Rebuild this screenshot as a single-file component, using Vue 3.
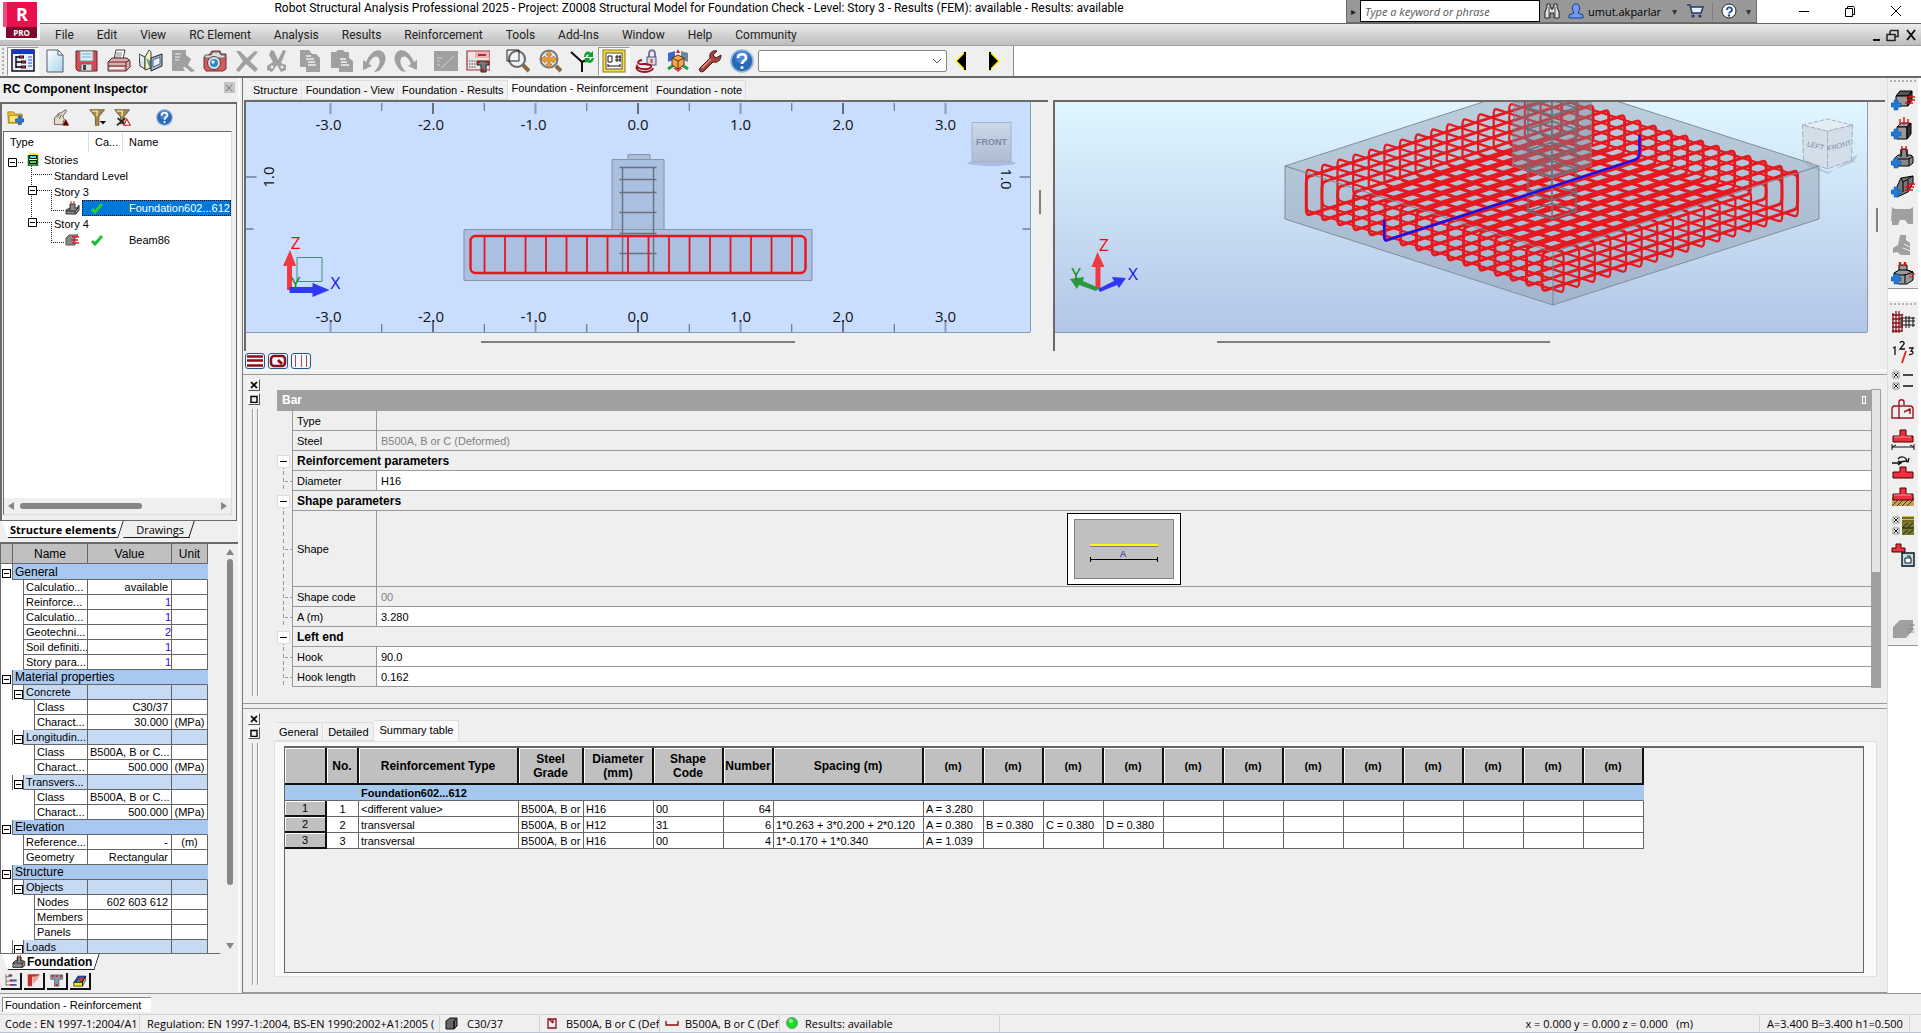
<script setup>
import { ref } from 'vue'

const keyword = ref('')
const command = ref('')

const menus = ['File', 'Edit', 'View', 'RC Element', 'Analysis', 'Results', 'Reinforcement', 'Tools', 'Add-Ins', 'Window', 'Help', 'Community']

const plus = '<path d="M0 15h3v-3h4v3h3v4h-3v3h-4v-3h-3z" fill="#1f7ad6" stroke="#1458a8" stroke-width=".6"/>'
const block = '<path d="M5 8l4-5h12l-4 5z" fill="#555" stroke="#000"/><path d="M5 8h12v10h-12z" fill="#999" stroke="#000"/><path d="M17 8l4-5v9l-4 6z" fill="#333" stroke="#000"/>'
const footing = '<path d="M10 3h6v6h4l2 2v6l-4 3h-15v-7l4-4h3z" fill="#888" stroke="#000"/><path d="M10 4v7M16 4v7M3 13h15v7M18 13l4-3M3 13l4-4" fill="none" stroke="#000"/><path d="M11 5v-5M15 5v-5" stroke="#e01010" stroke-width="1.4"/>'
const redFoot = '<path d="M9 3h6v6h7v6h-20v-6h7z" fill="#f03040" stroke="#400" stroke-width="1"/><path d="M3 10h17" stroke="#ff9090"/>'
const checks = '<path d="M2 3h6v6h-6zM2 14h6v6h-6z" fill="#fff" stroke="#888"/><path d="M3 4l4 4M7 4l-4 4M3 15l4 4M7 15l-4 4" stroke="#111"/>'

const icons = {
  inspector: '<rect x="1" y="1" width="22" height="21" fill="#e8eefc" stroke="#000" stroke-width="1.4"/><rect x="1" y="1" width="22" height="4" fill="#1238c8"/><path d="M5 7v12M5 8h4M5 13h6M5 18h6" stroke="#000" stroke-width="1.4" fill="none"/><path d="M8 8h5M10 13h5M10 18h5" stroke="#111" stroke-width="3"/><path d="M9 8h3M11 13h3M11 18h3" stroke="#d02020" stroke-width="1.6"/><path d="M17 8h4M17 11h4M17 14h4M17 17h4" stroke="#2050e0"/>',
  fresh: '<path d="M4 1h11l5 5v17h-16z" fill="url(#paper)" stroke="#50606c"/><path d="M15 1v5h5z" fill="#fff" stroke="#50606c"/>',
  save: '<path d="M1 2h21v20h-19l-2-2z" fill="#d84850" stroke="#6a2028"/><path d="M5 2h13v10h-13z" fill="#d6f0f6" stroke="#799"/><path d="M7 5h9M7 8h9" stroke="#7ab"/><path d="M6 15h11v7h-11z" fill="#ddd" stroke="#666"/><path d="M8 16h3v5h-3z" fill="#444"/>',
  print: '<path d="M7 10l2-9h9l-2 9z" fill="#fff" stroke="#444"/><path d="M9 4h6M9 6h6M8 8h6" stroke="#888"/><path d="M1 13l4-4h15l3 3v6l-4 4h-18z" fill="#e0a8a6" stroke="#4a2a2a"/><path d="M1 13h18v9M1 17h18M19 13l4-2" stroke="#5a2a2a" fill="none"/><path d="M3 19h14" stroke="#eee" stroke-width="2"/>',
  book: '<path d="M0 5l6 3v12l-5-3z" fill="#dfe9ee" stroke="#333"/><path d="M6 8l4-7 2 2v16l-6 2z" fill="#f2f0b8" stroke="#444"/><path d="M7 9l4 3v8z" fill="#4aa090"/><path d="M12 9l11-4v12l-11 5z" fill="#9fb8d8" stroke="#222"/><path d="M14 11l7-3v7l-7 3z" fill="#e8f0fa" stroke="#567"/>',
  preview: '<path d="M1 1h14v5l5 4-3 6 7 6-4 1-6-5h-2l2 4h-13z" fill="#a0a0a0"/><path d="M4 5h6M4 8h5M4 11h4" stroke="#efefef"/>',
  camera: '<path d="M1 8l6-3 2-3h8l1 3h5v15l-3 2h-17l-2-3z" fill="#dd5858" stroke="#6a3030"/><path d="M2 6h6l2-3h6l2 3h4v3h-20z" fill="#ddd" stroke="#666"/><circle cx="11" cy="14" r="6.5" fill="#d8dee2" stroke="#445"/><circle cx="11" cy="14" r="4" fill="#3a86b8"/><circle cx="10" cy="13" r="1.7" fill="#d8f0ff"/>',
  remove: '<path d="M1 2l4 0 7 7 8-7 3 1-8 9 8 8-3 3-9-8-7 8-3-2 7-9z" fill="#a0a0a0"/>',
  cut: '<path d="M5 1l3 1 4 9 5-10 3 1-5 12 5 2v5l-5 2-4-7-5 7-5-2v-4l6-4-4-7z" fill="#a0a0a0"/><circle cx="6" cy="18" r="1.5" fill="#efefef"/><circle cx="16" cy="18" r="1.5" fill="#efefef"/>',
  copy: '<path d="M2 1h9l3 4h4l4 4v14h-14v-5h-6z" fill="#a0a0a0"/><path d="M8 7h5M8 10h8M10 13h7M10 16h8" stroke="#efefef" stroke-width="1.3"/>',
  paste: '<path d="M1 3h5l2-2h5l2 2h4v6l4 3v11h-14v-4h-8z" fill="#a0a0a0"/><path d="M10 10h6M11 13h6M11 16h8" stroke="#efefef" stroke-width="1.3"/>',
  undo: '<path d="M1 21v-10l3 2c5-11 12-14 17-10 5 6 2 13-4 19l-5 1c6-7 7-11 4-15-4-2-7 2-9 7l3 2z" fill="#a0a0a0"/>',
  redo: '<path d="M23 21v-10l-3 2c-5-11-12-14-17-10-5 6-2 13 4 19l5 1c-6-7-7-11-4-15 4-2 7 2 9 7l-3 2z" fill="#a0a0a0"/>',
  form: '<path d="M0 2h24v20h-24z" fill="#a0a0a0"/><path d="M3 9h6M3 12h3M3 16h3M7 19l13-12" stroke="#d0d0d0"/>',
  calc: '<path d="M1 2h23v19h-23z" fill="#ece4e4" stroke="#a03038" stroke-width="1.2"/><path d="M9 3h14v6h-14z" fill="#f4b0b0"/><path d="M12 6h8" stroke="#a03038" stroke-width="2"/><path d="M3 12h7M3 15h7M3 18h7" stroke="#444" stroke-dasharray="1.5 1"/><path d="M11 12h12v4h-3v7h-5v-7h-4z" fill="#777" stroke="#222"/><path d="M12 13h2M20 13h2M16 21h2" stroke="#e00" stroke-width="2"/>',
  zoom: '<circle cx="11" cy="10" r="8" fill="#eef2f4" fill-opacity=".9" stroke="#666" stroke-width="2"/><path d="M1 1h12v11h-12z" fill="none" stroke="#222"/><path d="M17 16l6 6" stroke="#8a6a40" stroke-width="4"/>',
  pan: '<circle cx="11" cy="10" r="8.5" fill="#e4e8ec" stroke="#777" stroke-width="2"/><path d="M11 2l3 4h-2v3h3v-2l4 3-4 4v-2h-3v3h2l-3 4-3-4h2v-3h-3v2l-4-4 4-3v2h3v-3h-2z" fill="#f0a030" stroke="#a06010" stroke-width=".6"/><path d="M18 17l5 5" stroke="#8a6a40" stroke-width="4"/>',
  axes: '<path d="M1 3l11 10v10M12 13l6-3" stroke="#111" stroke-width="2" fill="none"/><path d="M14 8c0-5 4-7 7-4l2-2v6h-6l2-2c-2-1-3 0-3 2zM24 9c-1 5-4 6-7 4l-2 1v-5h5l-1 2c2 0 2-1 3-2z" fill="#10a030"/>',
  dims: '<rect x="1" y="1" width="22" height="22" fill="#f8e040" stroke="#8a7a10"/><rect x="4" y="4" width="16" height="16" fill="#fff" stroke="#555"/><path d="M6 7h4v6h-4zM13 8h6M13 11h6M15 6v7M18 6v7M6 17h12M6 15v3M18 15v3" stroke="#111" fill="none"/>',
  lock: '<path d="M15 8v-3c0-5 6-5 6 0v3" fill="none" stroke="#779" stroke-width="2"/><rect x="13" y="8" width="9" height="8" fill="#d4dcec" stroke="#557"/><path d="M17.500 10v4" stroke="#d05020" stroke-width="2"/><path d="M8 11c-6 1-5 5 2 4 5 0 8 1 7 3-3 4-13 2-14-1-2 4 3 6 8 6 4 0 8-2 8-4" fill="none" stroke="#9a1020" stroke-width="1.8"/>',
  cube: '<path d="M2 4l7-2v8l-7 3z" fill="#3a66d8"/><path d="M15 2l7 2v9l-7-3z" fill="#6a8a9a"/><path d="M12 0l2 4h-4z" fill="#d02020"/><path d="M2 20l6-4M22 20l-6-4" stroke="#20a040" stroke-width="3"/><path d="M7 19l5 4 5-4z" fill="#f04040"/><path d="M6 9l6-3 6 3v7l-6 4-6-4z" fill="#f0a850" stroke="#5a3010"/><path d="M6 9l6 3 6-3M12 12v8" fill="none" stroke="#5a3010"/>',
  wrench: '<path d="M2 19l10-10c-1-5 2-8 7-7l-4 4 3 3 5-3c0 6-4 8-8 7l-9 9c-3 2-6 0-4-3z" fill="#a84040" stroke="#401818"/><path d="M4 19l9-9" stroke="#e09090" stroke-width="1.5"/>',
  help: '<circle cx="12" cy="12" r="11" fill="#2a68b8" stroke="#8fb6dc" stroke-width="1.6"/><circle cx="12" cy="8" r="6.5" fill="#5c98dc" opacity=".7"/><path d="M8 9c0-5 8-5 8-.5 0 3-4 3-4 6.500" fill="none" stroke="#fff" stroke-width="2.6"/><circle cx="12" cy="18.500" r="1.6" fill="#fff"/>',
  folder: '<path d="M1 4h8l2 3h10v13h-19z" fill="#e8c030" stroke="#907010"/><path d="M3 9h19l-2 10h-17z" fill="#fbe470" stroke="#a08010"/><path d="M12 14h4v-4h4v4h4v4h-4v4h-4v-4h-4z" fill="#2a7ad8" stroke="#14509a"/>',
  hand: '<path d="M2 22v-9l6-7 4-1 6-4 1 2-5 7 2 5-3 7z" fill="#e4dcc8" stroke="#3a3020"/><path d="M6 12l3-5M9 14l3-6" stroke="#3a3020"/><path d="M14 23l4-8 4 8z" fill="#400" stroke="#900"/>',
  funnel: '<path d="M1 1h21l-8 10v12h-5v-12z" fill="#a88848" stroke="#5a4418"/><path d="M4 3h8l-1 7" stroke="#efe0b0" stroke-width="2" fill="none"/><path d="M15 17h9l-4 5z" fill="#111"/>',
  funnelx: '<path d="M1 1h21l-8 10v10h-5v-10z" fill="#a88848" stroke="#5a4418"/><path d="M4 3h8l-1 7" stroke="#efe0b0" stroke-width="2" fill="none"/><path d="M5 13l12 10M16 13l-12 10" stroke="#222" stroke-width="2.4"/><path d="M14 23l4-9 5 9z" fill="#fff" stroke="#d02020" stroke-width="1.6"/>',
  beamAdd: block + '<path d="M15 9h9M16 12h8M14 15h8" stroke="#e01010" stroke-width="1.4"/>' + plus,
  colAdd: '<path d="M6 10l4-4h9l-3 4z" fill="#aaa" stroke="#000"/><path d="M6 10h10v12h-10z" fill="#999" stroke="#000"/><path d="M16 10l4-4v11l-4 5z" fill="#333" stroke="#000"/><path d="M9 8v-6M13 8v-8M17 8v-6" stroke="#e01010" stroke-width="1.4"/>' + plus,
  footing,
  footAdd: footing + plus,
  wallAdd: '<path d="M3 18l7-15 12-2v7l-5 9-11 5z" fill="#777" stroke="#000"/><path d="M10 3l2 4 10-6M12 7v10M17 5v9" stroke="#000" fill="none"/><path d="M14 12h9M14 15h8M17 9h7" stroke="#e01010" stroke-width="1.3"/>' + plus,
  wallOff: '<path d="M1 3l3 2h15l3-2v17h-5l-3-4h-5l-2 5h-6v-4h-1z" fill="#a0a0a0"/>',
  slabOff: '<path d="M9 2h6v5l4 3v12h-9l-4-3-4 1v-5l5-3z" fill="#a0a0a0"/><path d="M13 11l6 3M12 15l7 3" stroke="#efefef"/>',
  jointAdd: '<path d="M8 3h8v5l6 2v8l-6 4h-8l-5-4v-7l5-3z" fill="#999" stroke="#000"/><path d="M8 8h8l6 2M14 12v9M3 11l5 2h6l8-3" fill="none" stroke="#000"/><path d="M9 4v-4M14 4v-4" stroke="#e01010" stroke-width="2.4"/><path d="M18 12h6M18 15h5" stroke="#e01010"/>' + plus,
  mesh: '<path d="M2 2v20M5 0v22M8 0v22M11 3v18M1 4h11M1 8h11M1 12h11M1 16h11M1 20h10" stroke="#8a1018" stroke-width="1.300"/><path d="M9 7h15M9 10h15M9 14h15M15 5v12M18 5v12M22 6v10" stroke="#111"/>',
  order: '<path d="M2 8l2-1v8M9 3c1-3 5-1 4 1l-4 5h5M18 8h4l-2 3c3 0 3 4-2 3.500" fill="none" stroke="#111" stroke-width="1.3"/><path d="M15 11l-4 12" stroke="#e02020" stroke-width="1.8"/>',
  checklist: checks + '<path d="M12 6h10M12 17h10" stroke="#111" stroke-width="1.3"/>',
  stirrup: '<path d="M8 21v-17c0-3 5-3 5 0v3M2 8h17c3 0 3 3 3 3v9h-21v-9c0-3 3-3 3-3M13 14l6-3v5" fill="none" stroke="#9a1828" stroke-width="1.4"/>',
  footDim: redFoot + '<path d="M1 20h22M1 17v6M23 17v6M1 20l4-2M23 20l-4-2" stroke="#111" fill="none"/>',
  footRot: '<path d="M9 11h6v5h7v6h-20v-6h7z" fill="#f03040" stroke="#400"/><path d="M1 7h9M7 5l3 2-3 2M7 3c3-4 8-2 9 2M14 5l3 1 1-4M8 6l8-1" stroke="#111" fill="none" stroke-width="1.3"/>',
  footSoil: '<path d="M1 12h22v9h-22z" fill="#c8a060"/><path d="M1 21l6-6M6 21l6-6M11 21l6-6M16 21l6-6M1 14h22" stroke="#4a3010"/>' + redFoot,
  soilList: checks + '<path d="M11 2h12v6h-12z" fill="#d8c040"/><path d="M11 8h12v13h-12z" fill="#7a7a28"/><path d="M11 4h12M11 7h12M11 14h12" stroke="#111"/><path d="M12 13l5-4M17 13l5-4M12 20l5-4M17 20l5-4" stroke="#222"/>',
  footView: '<path d="M5 1h5v4h4v4h-13v-4h4z" fill="#f03040" stroke="#400"/><path d="M11 10h12v13h-12z" fill="#b8dcf4" stroke="#111" stroke-width="1.4"/><path d="M14 15h6v5h-6zM16 13h3v2" fill="#fff" stroke="#111"/>',
  solidOff: '<path d="M2 10l7-7h13v10l-7 8h-13z" fill="#a0a0a0"/><path d="M18 8h6M17 12h6M16 15h7" stroke="#888"/>',
  treeTab: '<path d="M4 2v18M4 6h6M4 13h6M4 19h6" stroke="#333" fill="none"/><path d="M8 4h6M12 12h9M12 19h9" stroke="#3858b8" stroke-width="3"/><path d="M10 4h3M10 12h4M10 19h4" stroke="#d02020" stroke-width="3"/>',
  cornerTab: '<path d="M2 2h19l-2 4h-10v15h-7z" fill="#c03030"/><path d="M10 7l10-4-3 8-7 6z" fill="#f0a0a0"/>',
  teeTab: '<path d="M2 3h19v7h-6v11h-7v-11h-6z" fill="#8898a8" stroke="#445"/><path d="M4 5h3M10 5h3M17 5h3M10 19h3" stroke="#e01818" stroke-width="3"/>',
  mapTab: '<path d="M2 15l7-10h12l-5 10z" fill="#2040d0" stroke="#000"/><path d="M8 13l4-6 6 1-4 6z" fill="#e03020"/><path d="M6 14l4-3 3 3z" fill="#20c040"/><path d="M2 15h14v6h-14zM16 15l5-10v6l-5 10z" fill="#f8e820" stroke="#000"/>'
}

const tools = [
  ['inspector', 'Inspector'], ['fresh', 'New'], ['save', 'Save'], ['print', 'Print'], ['book', 'Compose'], ['preview', 'Preview'],
  ['camera', 'Capture'], ['remove', 'Delete'], ['cut', 'Cut'], ['copy', 'Copy'], ['paste', 'Paste'], ['undo', 'Undo'], ['redo', 'Redo'],
  null, ['form', 'Parameters'], ['calc', 'Calculate'],
  null, ['zoom', 'Zoom'], ['pan', 'Pan'], ['axes', 'Refresh view'], ['dims', 'Dimensions'], ['lock', 'Lock'], ['cube', 'Projection'], ['wrench', 'Preferences'], ['help', 'Help']
]
const pressed = ['inspector', 'dims']

const addTools = ['beamAdd', 'colAdd', 'footAdd', 'wallAdd', 'wallOff', 'slabOff', 'jointAdd']
const editTools = ['mesh', 'order', 'checklist', 'stirrup', 'footDim', 'footRot', 'footSoil', 'soilList', 'footView']

const docTabs = ['Structure', 'Foundation - View', 'Foundation - Results', 'Foundation - Reinforcement', 'Foundation - note']

// kind: c = category, s = sub-category, 1 / 2 = item level
const props = [
  ['c', 'General'],
  ['1', 'Calculatio...', 'available'], ['1', 'Reinforce...', '1', '', 1], ['1', 'Calculatio...', '1', '', 1],
  ['1', 'Geotechni...', '2', '', 1], ['1', 'Soil definiti...', '1', '', 1], ['1', 'Story para...', '1', '', 1],
  ['c', 'Material properties'],
  ['s', 'Concrete'], ['2', 'Class', 'C30/37'], ['2', 'Charact...', '30.000', '(MPa)'],
  ['s', 'Longitudin...'], ['2', 'Class', 'B500A, B or C...'], ['2', 'Charact...', '500.000', '(MPa)'],
  ['s', 'Transvers...'], ['2', 'Class', 'B500A, B or C...'], ['2', 'Charact...', '500.000', '(MPa)'],
  ['c', 'Elevation'], ['1', 'Reference...', '-', '(m)'], ['1', 'Geometry', 'Rectangular'],
  ['c', 'Structure'],
  ['s', 'Objects'], ['2', 'Nodes', '602 603 612'], ['2', 'Members', ''], ['2', 'Panels', ''],
  ['s', 'Loads']
]

const barRows = [
  { label: 'Type', value: '', off: true, plain: true },
  { label: 'Steel', value: 'B500A, B or C (Deformed)', off: true, plain: true },
  { head: 'Reinforcement parameters' },
  { label: 'Diameter', value: 'H16' },
  { head: 'Shape parameters' },
  { label: 'Shape', shape: true, off: true },
  { label: 'Shape code', value: '00', off: true },
  { label: 'A (m)', value: '3.280' },
  { head: 'Left end' },
  { label: 'Hook', value: '90.0' },
  { label: 'Hook length', value: '0.162' }
]

const heads = ['', 'No.', 'Reinforcement Type', 'Steel Grade', 'Diameter (mm)', 'Shape Code', 'Number', 'Spacing (m)', ...Array(12).fill('(m)')]
const summary = [
  ['1', '<different value>', 'B500A, B or', 'H16', '00', '64', '', 'A = 3.280'],
  ['2', 'transversal', 'B500A, B or', 'H12', '31', '6', '1*0.263 + 3*0.200 + 2*0.120', 'A = 0.380', 'B = 0.380', 'C = 0.380', 'D = 0.380'],
  ['3', 'transversal', 'B500A, B or', 'H16', '00', '4', '1*-0.170 + 1*0.340', 'A = 1.039']
].map(r => [...r, ...Array(19 - r.length).fill('')])

const step = 102.5
const ticks = [-3, -2, -1, 0, 1, 2, 3].map(n => ({ x: 392.5 + n * step, t: n.toFixed(1), dark: n % 2 === 0 }))
const halfTicks = [-2.5, -1.5, -0.5, 0.5, 1.5, 2.5].map(n => 392.5 + n * step)
const stirrups = Array.from({ length: 16 }, (_, i) => 239 + i * 20.5)

// Axonometric projection of the footing: u, v along the sides, z upwards (0..1 each)
const pt = (u, v, z) => `${(498 + 266 * u - 268 * v).toFixed(1)} ${(203 - 86 * u - 86 * v - 53 * z).toFixed(1)}`
const hoop = (f, lo, hi) => {
  const a = 0.02, b = 0.98, r = 0.012, q = 0.12
  return `M${f(a, lo + q)}L${f(a, hi - q)}Q${f(a, hi)} ${f(a + r, hi)}L${f(b - r, hi)}Q${f(b, hi)} ${f(b, hi - q)}L${f(b, lo + q)}Q${f(b, lo)} ${f(b - r, lo)}L${f(a + r, lo)}Q${f(a, lo)} ${f(a, lo + q)}`
}
const spots = Array.from({ length: 16 }, (_, i) => 0.06 + i * 0.0587)
const cageX = spots.map(s => hoop((t, z) => pt(t, s, z), 0.13, 0.85)).join('')
const cageY = spots.map(s => hoop((t, z) => pt(s, t, z), 0.1, 0.88)).join('')
const hull = `M${pt(0, 0, 0)}L${pt(1, 0, 0)}L${pt(1, 0, 1)}L${pt(1, 1, 1)}L${pt(0, 1, 1)}L${pt(0, 1, 0)}Z`
const edges = `M${pt(0, 0, 0)}L${pt(0, 0, 1)}L${pt(1, 0, 1)}M${pt(0, 0, 1)}L${pt(0, 1, 1)}`
const ring = z => `M${pt(0.455, 0.455, z)}L${pt(0.545, 0.455, z)}L${pt(0.545, 0.545, z)}L${pt(0.455, 0.545, z)}Z`
const colBars = [0.15, 0.5, 0.95, 1.3, 1.7, 2.1, 2.4].map(ring).join('') +
  [[0.455, 0.455], [0.545, 0.455], [0.455, 0.545], [0.545, 0.545]].map(([u, v]) => `M${pt(u, v, 0.12)}L${pt(u, v, 2.8)}`).join('')
const column = `M${pt(0.4265, 0.4265, 1)}L${pt(0.5735, 0.4265, 1)}V0H459L${pt(0.4265, 0.5735, 1)}Z`
const marked = `M${pt(0.02, 0.65, 0.52)}L${pt(0.02, 0.65, 0.2)}Q${pt(0.02, 0.65, 0.1)} ${pt(0.035, 0.65, 0.12)}L${pt(0.96, 0.65, 0.12)}Q${pt(0.98, 0.65, 0.12)} ${pt(0.98, 0.65, 0.24)}V33`
</script>

<template>
  <div class="app">
    <svg class="defs" width="0" height="0" aria-hidden="true">
      <defs>
        <linearGradient id="paper" x1="0" y1="0" x2="1" y2="1"><stop offset="0" stop-color="#fff" /><stop offset="1" stop-color="#a8d4ec" /></linearGradient>
        <linearGradient id="sky" x1="0" y1="0" x2="0" y2="1"><stop offset="0" stop-color="#e0f6ff" /><stop offset="1" stop-color="#b2c6e7" /></linearGradient>
        <linearGradient id="face" x1="0" y1="0" x2="0" y2="1"><stop offset="0" stop-color="#cdd9ea" /><stop offset="1" stop-color="#aebbd2" /></linearGradient>
      </defs>
    </svg>

    <header class="top">
      <div class="logo" aria-hidden="true">
        <span class="logo-r">R</span><span class="logo-pro">PRO</span>
      </div>
      <div class="titlebar">
        <h1>Robot Structural Analysis Professional 2025 - Project: Z0008 Structural Model for Foundation Check - Level: Story 3 - Results (FEM): available - Results: available</h1>
        <div class="infobar">
          <span class="tri">▸</span>
          <input v-model="keyword" type="text" aria-label="Search" placeholder="Type a keyword or phrase">
          <svg class="binoc" width="16" height="16" viewBox="0 0 16 16"><path d="M3 1h3v3h1v2h2v-2h1v-3h3v3l2 5v6h-5v-5h-4v5h-5v-6l2-5z" fill="#e4e4e4" stroke="#222" /><path d="M5 4v10M11 4v10" stroke="#444" /></svg>
          <svg width="16" height="16" viewBox="0 0 16 16"><path d="M8 1c5 0 4 7 2 9l5 2v3h-14v-3l5-2c-2-2-3-9 2-9z" fill="#6f9cf0" stroke="#1a3a8a" /></svg>
          <button class="user">umut.akparlar</button><span class="drop">▾</span>
          <svg class="cart" width="17" height="16" viewBox="0 0 17 16"><path d="M0 2h3l2 8h9l2-6h-12" fill="#e8eeff" stroke="#223a6a" stroke-width="1.500" /><circle cx="6" cy="13" r="1.600" fill="#223a6a" /><circle cx="13" cy="13" r="1.600" fill="#223a6a" /></svg>
          <i class="vsep" />
          <svg width="17" height="17" viewBox="0 0 17 17"><circle cx="8" cy="8" r="7" fill="#fff" stroke="#222" /><path d="M6 7c0-4 5-3 5 0 0 2-3 2-3 3.500" stroke="#1a4aa8" stroke-width="1.800" fill="none" /><circle cx="8" cy="12.500" r="1.200" fill="#1a4aa8" /></svg>
          <span class="drop">▾</span>
        </div>
        <div class="winctl">
          <button aria-label="Minimize"><svg width="12" height="12" viewBox="0 0 12 12"><path d="M1 6.500h10" stroke="#000" /></svg></button>
          <button aria-label="Restore"><svg width="12" height="12" viewBox="0 0 12 12"><path d="M1.500 3.500h7v8h-7zM3.500 3v-1.500h6l1 1v7h-1.500" fill="none" stroke="#000" /></svg></button>
          <button aria-label="Close"><svg width="12" height="12" viewBox="0 0 12 12"><path d="M1 1l10 10M11 1l-10 10" stroke="#000" /></svg></button>
        </div>
      </div>
      <nav class="menubar">
        <button v-for="m in menus" :key="m">{{ m }}</button>
        <svg class="mdi" width="46" height="16" viewBox="0 0 46 16" aria-hidden="true"><path d="M1 13h7" stroke="#111" stroke-width="2" /><path d="M18 3.500h8v6h-3M18 4v3M15 7.500h8v6h-8z" fill="none" stroke="#222" stroke-width="1.500" /><path d="M35 3l8 10M43 3l-8 10" stroke="#111" stroke-width="2" /></svg>
      </nav>
    </header>

    <div class="toolbar">
      <div class="tools">
        <i class="grip" />
        <template v-for="(t, i) in tools" :key="i">
          <i v-if="!t" class="gap" />
          <button v-else :class="{ on: pressed.includes(t[0]) }" :aria-label="t[1]"><svg width="24" height="24" viewBox="0 0 24 24" v-html="icons[t[0]]" /></button>
        </template>
        <select v-model="command" aria-label="Selection"><option value="" /></select>
        <button class="nav" aria-label="Previous"><svg width="14" height="20" viewBox="0 0 14 20"><path d="M11 1v18l-9-9z" stroke="#fff200" stroke-width="1.500" /><path d="M11 1v18" stroke="#000" stroke-width="2" /></svg></button>
        <button class="nav" aria-label="Next"><svg width="14" height="20" viewBox="0 0 14 20"><path d="M3 1v18l9-9z" stroke="#fff200" stroke-width="1.500" /><path d="M3 1v18" stroke="#000" stroke-width="2" /></svg></button>
      </div>
    </div>

    <div class="body">
      <aside class="left">
        <h2>RC Component Inspector <button class="x" aria-label="Close inspector"><svg width="10" height="10" viewBox="0 0 10 10"><path d="M2 2l6 6M8 2l-6 6" stroke="#777" /></svg></button></h2>
        <section class="inspector">
          <div class="itools">
            <button v-for="n in ['folder', 'hand', 'funnel', 'funnelx', 'help']" :key="n" :class="n" :aria-label="n"><svg width="17" height="17" viewBox="0 0 24 24" v-html="icons[n]" /></button>
          </div>
          <div class="tree">
            <div class="thead"><span class="c1">Type</span><span class="c2">Ca...</span><span class="c3">Name</span></div>
            <div class="row">
              <svg width="40" height="16"><path d="M4.500 6.500h8v8h-8zM6 10.500h5" fill="none" stroke="#000" /><path d="M14 10.500h6M27.500 14v2" class="dot" /><path d="M25 1h9v3h-9z" fill="#f8f020" /><path d="M25.500 3.500h7v3h-7z" fill="#30e8e8" stroke="#000" /><path d="M25.500 8.500h7v3h-7z" fill="#40e840" stroke="#000" /><path d="M24.500 3v11M33.500 3v11M24 13h10" stroke="#186018" stroke-width="1.500" /></svg>Stories
            </div>
            <div class="row"><svg width="50" height="16"><path d="M27.500 0v16M27 6.500h21" class="dot" /></svg>Standard Level</div>
            <div class="row"><svg width="50" height="16"><path d="M27.500 0v16M33 6.500h15M47.500 6v10" class="dot" /><path d="M24.500 2.500h8v8h-8zM26 6.500h5" fill="#fff" stroke="#000" /></svg>Story 3</div>
            <div class="row">
              <svg width="78" height="16"><path d="M27.500 0v16M47.500 0v10M47 10.500h13" class="dot" /><path d="M66 4h5v4h2l2-3v5l-3 4h-10v-4l4-2z" fill="#888" stroke="#333" /><path d="M66 8v3M62 11h9v3M71 11l4-4" fill="none" stroke="#333" /><path d="M67 1v3M70 1v3" stroke="#e02020" /></svg>
              <span class="sel"><svg class="check" width="14" height="12" viewBox="0 0 14 12"><path d="M2 7l3 3 7-8" stroke="#20d030" stroke-width="3" fill="none" /></svg><span>Foundation602...612</span></span>
            </div>
            <div class="row"><svg width="50" height="16"><path d="M27.500 0v3M33 6.500h15M47.500 6v10" class="dot" /><path d="M24.500 2.500h8v8h-8zM26 6.500h5" fill="#fff" stroke="#000" /></svg>Story 4</div>
            <div class="row">
              <svg width="78" height="16"><path d="M47.500 0v10M47 10.500h13" class="dot" /><path d="M62 6l3-3h9l-3 3v7h-9z" fill="#888" stroke="#555" /><path d="M68 5h7M67 8h7M68 11h7" stroke="#e02020" stroke-width="1.500" /></svg>
              <span class="unsel"><svg class="check" width="14" height="12" viewBox="0 0 14 12"><path d="M2 7l3 3 7-8" stroke="#20c030" stroke-width="3" fill="none" /></svg><span>Beam86</span></span>
            </div>
            <div class="hscroll"><i class="al" /><i class="bar" /><i class="ar" /></div>
          </div>
        </section>
        <div class="cuttabs">
          <button class="cut act">Structure elements</button><button class="cut">Drawings</button>
        </div>

        <section class="props">
          <div class="gridclip">
            <table>
              <colgroup><col class="w12"><col class="w11"><col class="w11"><col class="w53"><col class="w84"><col class="w36"></colgroup>
              <thead><tr><th /><th colspan="3">Name</th><th>Value</th><th>Unit</th></tr></thead>
              <tbody>
                <tr v-for="(p, i) in props" :key="i" :class="'k' + p[0]">
                  <template v-if="p[0] === 'c'"><td class="blank"><i class="pm" /></td><td colspan="5">{{ p[1] }}</td></template>
                  <template v-else-if="p[0] === 's'"><td class="blank" /><td class="blank"><i class="pm" /></td><td colspan="2" class="sub">{{ p[1] }}</td><td class="sub" /><td class="sub" /></template>
                  <template v-else>
                    <td class="blank" :colspan="p[0] === '1' ? 2 : 3" /><td :colspan="p[0] === '1' ? 2 : 1">{{ p[1] }}</td>
                    <td class="val" :class="{ link: p[4] }">{{ p[2] }}</td><td class="unit">{{ p[3] }}</td>
                  </template>
                </tr>
              </tbody>
            </table>
          </div>
          <div class="vscroll"><i class="au" /><i class="bar" /><i class="ad" /></div>
        </section>
        <div class="foottab"><button class="cut act"><svg width="17" height="15" viewBox="0 0 24 24" v-html="icons.footing" />Foundation</button></div>
        <div class="modes">
          <button v-for="n in ['treeTab', 'cornerTab', 'teeTab', 'mapTab']" :key="n" :aria-label="n"><svg width="16" height="15" viewBox="0 0 24 24" v-html="icons[n]" /></button>
        </div>
      </aside>

      <main class="center">
        <div class="tabs">
          <button v-for="t in docTabs" :key="t" :class="{ act: t === 'Foundation - Reinforcement' }">{{ t }}</button>
        </div>
        <div class="views">
          <section class="view front">
            <svg class="canvas" viewBox="0 0 785 230" preserveAspectRatio="xMidYMid slice">
              <rect width="785" height="230" fill="#c9ddff" />
              <path v-for="x in halfTicks" :key="x" :d="`M${x} 1v8M${x} 222v8`" stroke="#55657c" />
              <g v-for="t in ticks" :key="t.t">
                <path :d="`M${t.x} 1v11M${t.x} 218v12`" :stroke="t.dark ? '#000' : '#8a9cb8'" :stroke-width="t.dark ? 1 : 2" />
                <text :x="t.x - (t.t[0] === '-' ? 2 : 0)" y="28" class="tick">{{ t.t }}</text>
                <text :x="t.x - (t.t[0] === '-' ? 2 : 0)" y="220" class="tick">{{ t.t }}</text>
              </g>
              <path d="M0 75h11M774 75h11M0 127h8M777 127h8" stroke="#6f8098" stroke-width="1.500" />
              <text transform="translate(28 75) rotate(-90)" class="tick">1.0</text>
              <text transform="translate(755 77) rotate(90)" class="tick">1.0</text>
              <g fill="#8296b4" fill-opacity=".42" stroke="#8a94a4"><path d="M218.500 127.500h348v51h-348zM366.500 57.500h52v70h-52zM382.500 52.500h22v5h-22z" /></g>
              <path d="M377 65v105M408 65v105M374 65.500h37M374 77.500h37M374 90.500h37M374 110.500h37M374 131.500h37M374 151.500h37" stroke="#68707e" stroke-width="1.400" />
              <g stroke="#e8141c" fill="none"><rect x="225" y="134" width="335" height="37" rx="5" stroke-width="2.400" /><path v-for="x in stirrups" :key="x" :d="`M${x} 134v37`" stroke-width="1.800" /></g>
              <path d="M51.500 155.500h25v24h-25z" fill="none" stroke="#4a8a78" />
              <path d="M41.500 188v-24h-4l7-16 6 16h-4v24z" fill="#f23840" />
              <path d="M44 185h23v-4l17 7-17 7v-4h-23z" fill="#3038f8" />
              <g class="axis"><text x="50" y="147" fill="#f00">Z</text><text x="50" y="187" fill="#0a8a0a">Y</text><text x="90" y="187" fill="#1010f0">X</text></g>
              <ellipse cx="746" cy="61" rx="24" ry="3" fill="#7a8cb0" opacity=".4" />
              <path d="M726.500 20.500h39v39h-39z" fill="url(#face)" stroke="#a2b2cc" />
              <text x="746" y="43" class="cubetxt">FRONT</text>
            </svg>
            <div class="vs"><i /></div>
            <div class="hs"><i /></div>
          </section>
          <section class="view iso">
            <svg class="canvas" viewBox="0 0 812 230" preserveAspectRatio="xMidYMid slice">
              <rect width="812" height="230" fill="url(#sky)" />
              <path :d="hull" fill="#8492a6" fill-opacity=".4" stroke="#858c94" />
              <path :d="cageY" fill="none" stroke="#e61820" stroke-width="2.200" />
              <path :d="cageX" fill="none" stroke="#e61820" stroke-width="3" />
              <path :d="edges" fill="none" stroke="#80868e" />
              <path :d="column" fill="#7c8896" fill-opacity=".42" stroke="#82888f" stroke-dasharray="3 1" />
              <path :d="colBars" fill="none" stroke="#6c727a" stroke-width="1.600" />
              <path :d="marked" fill="none" stroke="#1010ff" stroke-width="2.400" />
              <path d="M40.500 187v-22h-4l6-15 7 15h-4v22z" fill="#f23840" />
              <path d="M43 187l16-8-2-4 14 1-7 10-2-3-17 7z" fill="#3038f8" />
              <path d="M44 186l-16-7 1-4-14 2 7 10 2-4 17 6z" fill="#2a9a3a" />
              <g class="axis"><text x="49" y="149" fill="#f00">Z</text><text x="21" y="178" fill="#0a8a0a">Y</text><text x="78" y="178" fill="#1010f0">X</text></g>
              <path d="M750 60l23 10 26-10 4-8-30 20-20-8z" fill="#8898b4" opacity=".4" />
              <path d="M747.500 23l25 6v38l-24-9zM797.500 23l-25 6v38l24-9z" fill="#d3dee8" stroke="#a4b0be" stroke-dasharray="6 2" />
              <path d="M747.500 23l25-6 25 6-25 6z" fill="#e4edf2" stroke="#a4b0be" stroke-dasharray="4 2" />
              <text transform="translate(760 46) rotate(14)" class="cubetxt sm">LEFT</text>
              <text transform="translate(785 46) rotate(-14)" class="cubetxt sm">FRONT</text>
            </svg>
            <div class="vs"><i /></div>
            <div class="hs"><i /></div>
          </section>
        </div>
        <div class="layers">
          <button aria-label="Longitudinal bars"><svg width="18" height="14" viewBox="0 0 18 14"><path d="M1 2.500h16M1 6.500h16M1 11.500h16" stroke="#8a1018" stroke-width="2.400" /></svg></button>
          <button aria-label="Stirrups"><svg width="18" height="14" viewBox="0 0 18 14"><rect x="2" y="2" width="14" height="10" rx="3" fill="none" stroke="#8a1018" stroke-width="2.500" /><path d="M9 6l4 4" stroke="#8a1018" stroke-width="3" /></svg></button>
          <button aria-label="Vertical bars"><svg width="18" height="14" viewBox="0 0 18 14"><path d="M3.500 1v12M9.500 1v12M14.500 1v12" stroke="#b04850" /></svg></button>
        </div>

        <section class="dock bar">
          <div class="side"><button aria-label="Close panel"><svg width="8" height="8" viewBox="0 0 8 8"><path d="M1 1l6 6M7 1l-6 6" stroke="#000" stroke-width="1.600" /></svg></button><button aria-label="Maximize panel"><svg width="8" height="8" viewBox="0 0 8 8"><path d="M1 1.500h6v6h-6zM1 1.500h6" fill="none" stroke="#000" stroke-width="1.400" /></svg></button><i /></div>
          <div class="bargrid">
            <h3>Bar<i class="glyph" /></h3>
            <table>
              <colgroup><col class="w15"><col class="w85"><col></colgroup>
              <tbody>
                <tr v-for="(r, i) in barRows" :key="i">
                  <template v-if="r.head"><td class="gut hd"><i class="exp" /></td><th colspan="2" scope="rowgroup">{{ r.head }}</th></template>
                  <template v-else>
                    <td class="gut" :class="{ none: r.plain }" />
                    <td class="lab"><label :for="'f' + i">{{ r.label }}</label></td>
                    <td :class="['v', { off: r.off, shape: r.shape }]">
                      <svg v-if="r.shape" :id="'f' + i" width="114" height="72" viewBox="0 0 114 72"><rect x=".5" y=".5" width="113" height="71" fill="#fff" stroke="#000" /><rect x="7.500" y="6.500" width="99" height="59" fill="#c0c0c0" stroke="#808080" /><path d="M23 32h68" stroke="#ff0" stroke-width="2" /><path d="M23 33.500h68" stroke="#777" /><path d="M23 46.500h68M23.500 44v5M90.500 44v5" stroke="#000" /><text x="56" y="44" class="dimtxt">A</text></svg>
                      <input v-else :id="'f' + i" type="text" :value="r.value" :disabled="r.off">
                    </td>
                  </template>
                </tr>
              </tbody>
            </table>
          </div>
          <div class="barscroll"><i /></div>
        </section>

        <section class="dock sum">
          <div class="side"><button aria-label="Close panel"><svg width="8" height="8" viewBox="0 0 8 8"><path d="M1 1l6 6M7 1l-6 6" stroke="#000" stroke-width="1.600" /></svg></button><button aria-label="Maximize panel"><svg width="8" height="8" viewBox="0 0 8 8"><path d="M1 1.500h6v6h-6zM1 1.500h6" fill="none" stroke="#000" stroke-width="1.400" /></svg></button><i /></div>
          <div class="sumwrap">
            <div class="tabs seg"><button>General</button><button>Detailed</button><button class="act">Summary table</button></div>
            <div class="page">
              <div class="sheet">
                <table>
                  <colgroup><col class="w42"><col class="w32"><col class="w160"><col class="w65"><col class="w70"><col class="w70"><col class="w50"><col class="w150"><col v-for="n in 12" :key="n" class="w60"></colgroup>
                  <thead><tr><th v-for="(h, i) in heads" :key="i" :class="{ lite: i > 7 }">{{ h }}</th></tr></thead>
                  <tbody>
                    <tr class="grp"><td /><td /><td colspan="18">Foundation602...612</td></tr>
                    <tr v-for="(r, i) in summary" :key="i"><th class="lite">{{ i + 1 }}</th><td v-for="(c, j) in r" :key="j" :class="{ ctr: j === 0, num: j === 5 }">{{ c }}</td></tr>
                  </tbody>
                </table>
              </div>
            </div>
          </div>
        </section>
      </main>

      <div class="right">
        <div class="rgroup"><i class="rgrip" /><button v-for="n in addTools" :key="n" :aria-label="n"><svg width="24" height="24" viewBox="0 0 24 24" v-html="icons[n]" /></button></div>
        <div class="rgroup"><i class="rgrip" /><button v-for="n in editTools" :key="n" :aria-label="n"><svg width="24" height="24" viewBox="0 0 24 24" v-html="icons[n]" /></button><button class="last" aria-label="Solid view"><svg width="24" height="24" viewBox="0 0 24 24" v-html="icons.solidOff" /></button></div>
      </div>
    </div>

    <div class="wintabs"><button>Foundation - Reinforcement</button></div>
    <footer class="status">
      <span class="s1">Code : EN 1997-1:2004/A1</span>
      <span class="s2">Regulation: EN 1997-1:2004, BS-EN 1990:2002+A1:2005 (</span>
      <span class="s3"><svg width="14" height="14" viewBox="0 0 14 14"><path d="M1 4l4-3h7l-3 3v8h-8zM9 4v8l3-3v-8" fill="#666" stroke="#111" /></svg>C30/37</span>
      <span class="s4"><svg width="11" height="13" viewBox="0 0 11 13"><path d="M1 2h8v9h-8zM2 2l4 4M6 3v3" fill="none" stroke="#8a1018" stroke-width="1.300" /></svg>B500A, B or C (Def</span>
      <span class="s4 s5"><svg width="14" height="8" viewBox="0 0 14 8"><path d="M1 1v4h12v-4" fill="none" stroke="#8a1018" stroke-width="1.400" /></svg>B500A, B or C (Def</span>
      <span class="s6"><svg width="13" height="13" viewBox="0 0 13 13"><circle cx="6" cy="6" r="5.500" fill="#10e020" stroke="#888" /><circle cx="5" cy="4" r="2" fill="#a0ffa8" /></svg>Results: available</span>
      <span class="s7">x = 0.000 y = 0.000 z = 0.000 &nbsp; (m)</span>
      <span class="s8">A=3.400 B=3.400 h1=0.500</span>
    </footer>
  </div>
</template>

<style>
body { background: #efefef; overflow: hidden; }
</style>

<style scoped>
.app { height: 100vh; display: flex; flex-direction: column; background: #efefef; font: 11px/14px "Liberation Sans", Arial, sans-serif; color: #000; }
.app *, .app *::before { box-sizing: border-box; }
.defs { position: absolute; }
button { font: inherit; color: inherit; background: none; border: 0; padding: 0; margin: 0; white-space: nowrap; }
svg { display: block; flex: none; }
i { display: block; flex: none; }
h1, h2, h3 { margin: 0; }
table { border-collapse: separate; border-spacing: 0; table-layout: fixed; }

.top { position: relative; flex: none; }
.logo { position: absolute; left: 0; top: 0; width: 40px; height: 40px; padding: 2px 3px; background: #fff; text-align: center; color: #fff; font: bold 18px/25px "Open Sans", sans-serif; }
.logo-r { display: block; height: 25px; background: #e8114b; border-left: 4px solid #f04a78; }
.logo-pro { display: block; height: 11px; margin-left: 3px; background: #7d0a2c; font-size: 8px; line-height: 11px; }
.titlebar { height: 24px; background: #fff; display: flex; align-items: flex-start; font: 12px/17px Roboto, "Segoe UI", sans-serif; border-bottom: 1px solid #666; }
h1 { flex: 1; min-width: 0; padding-left: 52px; font: inherit; text-align: center; white-space: nowrap; overflow: hidden; }
.infobar { display: flex; align-items: center; height: 23px; width: 411px; background: #989898; border: 1px solid #6c6c6c; border-top: 0; gap: 4px; }
.infobar .tri { width: 13px; margin-right: -4px; text-align: center; color: #222; font-size: 10px; }
.infobar input { width: 180px; height: 22px; border: 1px solid #000; background: #fff; padding: 0 4px; font: italic 11px/18px "Open Sans", sans-serif; }
.infobar input::placeholder { color: #555; }
.binoc { margin: 0 4px 0 0; }
.user { font: 11px/17px "Open Sans", sans-serif; width: 76px; text-align: left; }
.drop { color: #333; width: 12px; text-align: center; font-size: 10px; }
.cart { margin-left: 3px; }
.vsep { width: 1px; height: 18px; margin: 0 4px; background: #7e7e7e; }
.winctl { display: flex; width: 164px; padding-left: 24px; height: 22px; }
.winctl button { width: 46px; display: grid; place-items: center; }
.menubar { height: 22px; padding: 0 3px 0 55px; display: flex; gap: 23px; align-items: center; background: linear-gradient(#ebebeb, #bdbdbd); border-bottom: 1px solid #a0a0a0; font: 12px/16px Roboto, "Segoe UI", sans-serif; color: #222; }
.mdi { margin-left: auto; }

.toolbar { flex: none; height: 32px; background: #fff; border-bottom: 2px solid #6a6a6a; }
.tools { display: flex; align-items: center; width: 1014px; height: 30px; background: #efefef; border-right: 1px solid #8a8a8a; }
.tools button { width: 32px; height: 29px; display: grid; place-items: center; }
.tools .on { background: #f8f8f8; border: 1px solid #999; border-right-color: #fff; border-bottom-color: #fff; }
.grip { width: 3px; height: 26px; margin: 0 2px; border-left: 2px dotted #b0b0b0; }
.gap { width: 8px; }
.tools select { appearance: none; width: 190px; height: 22px; border: 1px solid #888; border-radius: 2px; background: #fff url("data:image/svg+xml,%3Csvg xmlns='http://www.w3.org/2000/svg' width='10' height='6'%3E%3Cpath d='M1 1l4 4 4-4' fill='none' stroke='%23555'/%3E%3C/svg%3E") no-repeat right 4px center; }
.tools .nav { width: 28px; margin-right: 5px; }

.body { flex: 1; min-height: 0; display: flex; }
.left { width: 240px; flex: none; display: flex; flex-direction: column; border-right: 2px solid #fafafa; }
h2 { height: 22px; padding: 4px 3px 0; font: bold 12px/14px "Liberation Sans", Arial, sans-serif; display: flex; justify-content: space-between; }
.x { width: 11px; height: 11px; background: #c4c4c4; }
.inspector { flex: none; border: 2px solid #6a6a6a; border-right-width: 1px; border-bottom-width: 1px; margin-right: 1px; height: 419px; padding: 0 4px 5px 1px; display: flex; flex-direction: column; margin-top: 2px; background: #efefef; }
.itools { height: 27px; display: flex; align-items: center; padding-left: 4px; }
.itools button { width: 17px; }
.itools .hand { margin-left: 29px; }
.itools .funnel { margin-left: 19px; }
.itools .funnelx { margin-left: 8px; }
.itools .help { margin-left: 25px; }
.tree { flex: 1; display: flex; flex-direction: column; background: #fff; border: 1px solid #6a6a6a; border-right-color: #ddd; border-bottom-color: #ddd; }
.thead { display: flex; height: 20px; line-height: 20px; }
.thead span { border-right: 1px solid #ddd; padding-left: 6px; }
.thead .c1 { width: 85px; }
.thead .c2 { width: 34px; }
.thead .c3 { border: 0; }
.row { height: 16px; line-height: 16px; display: flex; white-space: pre; }
.dot { fill: none; stroke: #222; stroke-dasharray: 1 1; }
.sel, .unsel { flex: 1; display: flex; align-items: center; }
.sel { background: #0078d7; color: #fff; outline: 1px dotted #111; outline-offset: -1px; }
.check { margin: 0 25px 0 8px; }
.hscroll { margin-top: auto; height: 16px; background: #efefef; display: flex; align-items: center; padding: 0 4px; }
.hscroll .bar { flex: none; width: 122px; height: 6px; border-radius: 3px; background: #868686; margin: 0 auto 0 6px; }
.al, .ar { border: 4px solid transparent; border-left-width: 0; border-right: 6px solid #868686; }
.ar { border-right-width: 0; border-left: 6px solid #868686; }
.cuttabs { height: 21px; flex: none; padding-left: 2px; display: flex; }
.cut { position: relative; height: 17px; padding: 0 8px; font: 11px/17px "Open Sans", sans-serif; }
.cut + .cut { padding: 0 12px; }
.cut::before { content: ""; position: absolute; inset: 0 4px 0 2px; border: 0 solid #222; border-width: 0 1px 1px 0; transform: skewX(-18deg); }
.cut.act { background: #fff; clip-path: polygon(0 0, 100% 0, calc(100% - 6px) 100%, 6px 100%); font-weight: bold; }
.cut.act::before { inset: 0 3px 0 3px; }

.props { flex: 1; min-height: 0; display: flex; border-top: 2px solid #6a6a6a; border-left: 1px solid #6a6a6a; }
.gridclip { width: 219px; overflow: hidden; border-bottom: 1px solid #6a6a6a; }
.gridclip table { width: 207px; }
.w12 { width: 12px; } .w11 { width: 11px; } .w53 { width: 53px; } .w84 { width: 84px; } .w36 { width: 36px; }
.gridclip th { height: 20px; padding: 0; background: #c0c0c0; border: 0 solid #666; border-width: 0 1px 1px 0; font: 12px/18px "Liberation Sans", Arial, sans-serif; }
.gridclip td { height: 15px; padding: 0 0 0 2px; line-height: 14px; background: #fff; border: 0 solid #666; border-width: 0 1px 1px 0; white-space: nowrap; overflow: hidden; }
.gridclip td.blank { padding: 0; border-bottom: 0; }
.gridclip .kc td { background: #a9c8ef; font-size: 12px; border-right-color: #a9c8ef; }
.gridclip .kc:first-child td { height: 16px; }
.gridclip .kc td.blank { border-right-color: #666; background: #fff; }
.gridclip td.sub { background: #c6daf4; }
.gridclip td.val { text-align: right; padding: 0 3px 0 2px; }
.gridclip td.link { color: #30f; padding-right: 0; }
.gridclip td.unit { text-align: center; padding: 0; }
.pm { width: 9px; height: 9px; margin: 3px auto 0 1px; border: 1px solid #000; background: linear-gradient(#000, #000) center/5px 1px no-repeat #fff; }
.vscroll { width: 17px; margin-left: auto; padding: 5px 0; display: flex; flex-direction: column; align-items: center; }
.vscroll .bar { flex: none; width: 6px; height: 326px; border-radius: 3px; background: #868686; margin: 4px 0 auto; }
.au, .ad { border: 4px solid transparent; border-top-width: 0; border-bottom: 6px solid #868686; }
.ad { border-bottom-width: 0; border-top: 6px solid #868686; }
.foottab { height: 18px; flex: none; padding-left: 2px; }
.foottab .cut { display: flex; align-items: center; height: 16px; padding: 0 8px; font: bold 12px/16px "Liberation Sans", Arial, sans-serif; }
.modes { height: 21px; flex: none; display: flex; gap: 2px; padding: 1px 0 0 1px; }
.modes button { width: 21px; height: 17px; display: grid; place-items: center; border: 0 solid #111; border-width: 0 2px 2px 0; }

.center { flex: 1; min-width: 0; display: flex; flex-direction: column; margin-left: 2px; border-left: 1px solid #777; }
.tabs { flex: none; height: 22px; display: flex; align-items: flex-end; padding-left: 6px; }
.tabs button { height: 20px; padding: 0 3px; border: 1px solid #ddd; border-left-color: #f8f8f8; line-height: 18px; background: #f1f1f1; }
.tabs .act { height: 22px; background: #f9f9f9; border-bottom-color: #f9f9f9; padding-bottom: 2px; }
.views { flex: none; display: flex; gap: 5px; padding: 0 2px 0 1px; }
.view { display: grid; grid-template: 230px 19px / 1fr 18px; border: 0 solid #6a6a6a; border-width: 2px 0 0 2px; min-width: 0; }
.front { flex: 804 1 0; }
.iso { flex: 832 1 0; }
.canvas { width: 100%; height: 230px; }
.tick { font: 15px "Open Sans", sans-serif; text-anchor: middle; fill: #111; }
.axis { font: 17px "Open Sans", sans-serif; text-anchor: middle; }
.cubetxt { font: bold 9px "Liberation Sans", Arial, sans-serif; text-anchor: middle; fill: #7d8aa0; }
.sm { font-size: 7px; font-weight: normal; }
.vs { display: flex; justify-content: center; border-left: 1px solid #8a9ab8; }
.vs i { width: 2px; height: 24px; margin-top: 88px; background: #808080; }
.iso .vs i { margin-top: 106px; }
.hs { border-top: 1px solid #8a9ab8; grid-column: 1; }
.hs i { height: 2px; width: 40%; margin: 8px 0 0 30%; background: #808080; }
.iso .hs i { width: 41%; margin-left: 20%; }
.layers { flex: none; height: 20px; display: flex; gap: 3px; padding: 2px 0 0 2px; border-bottom: 1px solid #fff; }
.layers button { width: 20px; height: 16px; border: 1px solid #1a5a90; border-radius: 3px; display: grid; place-items: center; background: #f4f8fc; overflow: hidden; }

.dock { display: flex; border: 1px solid #999; border-left: 0; border-right: 0; }
.side { width: 34px; flex: none; display: flex; flex-direction: column; gap: 2px; padding: 4px 0 7px 5px; }
.side button { width: 12px; height: 12px; display: grid; place-items: center; border: 1px solid #fff; border-right: 1px solid #555; border-bottom: 1px solid #555; }
.side i { flex: 1; width: 6px; margin: 2px 0 0 4px; border: 1px solid #999; border-width: 0 1px; box-shadow: inset 1px 0 #fff, 1px 0 #fff; }
.bar { flex: none; height: 330px; margin-top: 3px; }
.bargrid { flex: 1; min-width: 0; margin-top: 15px; }
h3 { height: 21px; padding: 0 5px 1px; display: flex; justify-content: space-between; align-items: center; background: #a0a0a0; color: #fff; font: bold 12px/20px "Liberation Sans", Arial, sans-serif; }
.glyph { width: 4px; height: 8px; border: 1px solid #fff; }
.bargrid table { width: 100%; }
.w15 { width: 15px; } .w85 { width: 84px; }
.bargrid th, .bargrid td { height: 20px; padding: 0 0 0 4px; border: 0 solid #999; border-width: 0 0 1px 1px; text-align: left; }
.bargrid th { font-size: 12px; }
.bargrid .gut { border: 0; padding: 0; background: repeating-linear-gradient(#999 0 4px, transparent 4px 7px) 6px 0/1px 100% no-repeat, repeating-linear-gradient(90deg, #999 0 3px, transparent 3px 5px) 8px 50%/7px 1px no-repeat; }
.bargrid .gut.none { background: none; }
.bargrid .hd { background: repeating-linear-gradient(#999 0 3px, transparent 3px 5px) 6px 10px/1px 10px no-repeat; }
.exp { width: 13px; height: 13px; border: 1px solid #ddd; background: linear-gradient(#000, #000) center/7px 1px no-repeat #fff; }
.bargrid .v { background: #fff; padding: 0; }
.bargrid .v.off { background: #efefef; }
.bargrid .shape { height: 76px; }
.shape svg { margin: 0 auto; }
.dimtxt { font: 9px "Liberation Sans", Arial, sans-serif; fill: #1010b0; text-anchor: middle; }
.v input { display: block; width: 100%; height: 18px; border: 0; padding: 0 4px; background: none; font: inherit; color: #000; }
.v input:disabled { color: #808080; }
.barscroll { width: 10px; flex: none; height: 299px; margin: 14px 6px 0 0; padding-top: 182px; background: #e4e4e4; border: 1px solid #a0a0a0; border-bottom: 0; }
.barscroll i { height: 116px; background: #a0a0a0; }

.sum { flex: 1; min-height: 0; margin-top: 4px; }
.sumwrap { flex: 1; min-width: 0; display: flex; flex-direction: column; margin: 11px 10px 15px -3px; }
.seg { height: 21px; padding-left: 0; }
.seg button { height: 19px; padding: 0 4px; }
.seg .act { height: 21px; padding: 0 5px 1px; }
.page { flex: 1; padding: 4px 12px 3px 9px; background: #f9f9f9; border: 1px solid #e0e0e0; }
.sheet { height: 100%; background: #efefef; border: 1px solid #666; border-top-width: 2px; overflow: hidden; }
.w42 { width: 42px; } .w32 { width: 32px; } .w160 { width: 160px; } .w65 { width: 65px; } .w70 { width: 70px; } .w50 { width: 50px; } .w150 { width: 150px; } .w60 { width: 60px; }
.sheet table { width: 1359px; }
.sheet th { background: #c0c0c0; border: 0 solid #111; border-width: 0 2px 2px 0; box-shadow: inset 1px 1px #fff; padding: 0; }
.sheet thead th { height: 37px; font: bold 12px/14px "Liberation Sans", Arial, sans-serif; }
.sheet tbody th { font-weight: normal; height: 16px; line-height: 13px; }
.sheet thead .lite { font-size: 11px; }
.sheet td { height: 16px; padding: 0 2px; line-height: 14px; background: #fff; border: 0 solid #666; border-width: 0 1px 1px 0; white-space: nowrap; overflow: hidden; }
.sheet .grp td { background: #a5c8ef; border-right-color: #a5c8ef; font-weight: bold; }
.sheet td.ctr { text-align: center; }
.sheet td.num { text-align: right; }

.right { width: 34px; flex: none; display: flex; flex-direction: column; gap: 12px; background: #fff; border-left: 1px solid #ddd; padding-right: 3px; }
.rgroup { display: flex; flex-direction: column; align-items: center; gap: 5px; padding: 0 0 2px; background: #efefef; border-bottom: 1px solid #999; }
.rgroup + .rgroup { padding-bottom: 4px; }
.rgrip { width: 26px; height: 3px; margin-top: 2px; border-top: 2px dotted #b0b0b0; }
.rgroup button { height: 24px; }
.rgroup .last { margin-top: 45px; }

.wintabs { flex: none; height: 21px; border-top: 1px solid #999; padding: 3px 0 0 2px; }
.wintabs button { height: 15px; line-height: 13px; width: 149px; padding-left: 2px; text-align: left; background: #fff; border: 1px solid #888; border-right: 0; border-bottom: 0; }
.status { flex: none; height: 19px; display: flex; border-top: 1px solid #d4d4d4; border-bottom: 1px solid #b8c4d4; font: 11px/17px "Open Sans", "Segoe UI", sans-serif; white-space: nowrap; }
.status span { display: flex; align-items: center; gap: 8px; padding-left: 7px; border-right: 1px solid #d4d4d4; overflow: hidden; flex: none; }
.status .s1 { width: 140px; padding-left: 5px; }
.status .s2 { width: 300px; }
.status .s3 { width: 100px; padding-left: 5px; }
.status .s4 { width: 120px; }
.status .s5 { padding-left: 5px; gap: 6px; }
.status .s6 { width: 220px; padding-left: 6px; gap: 6px; }
.status .s7 { flex: 1; justify-content: flex-end; padding-right: 66px; }
.status .s8 { width: 150px; margin-right: 11px; }
</style>
